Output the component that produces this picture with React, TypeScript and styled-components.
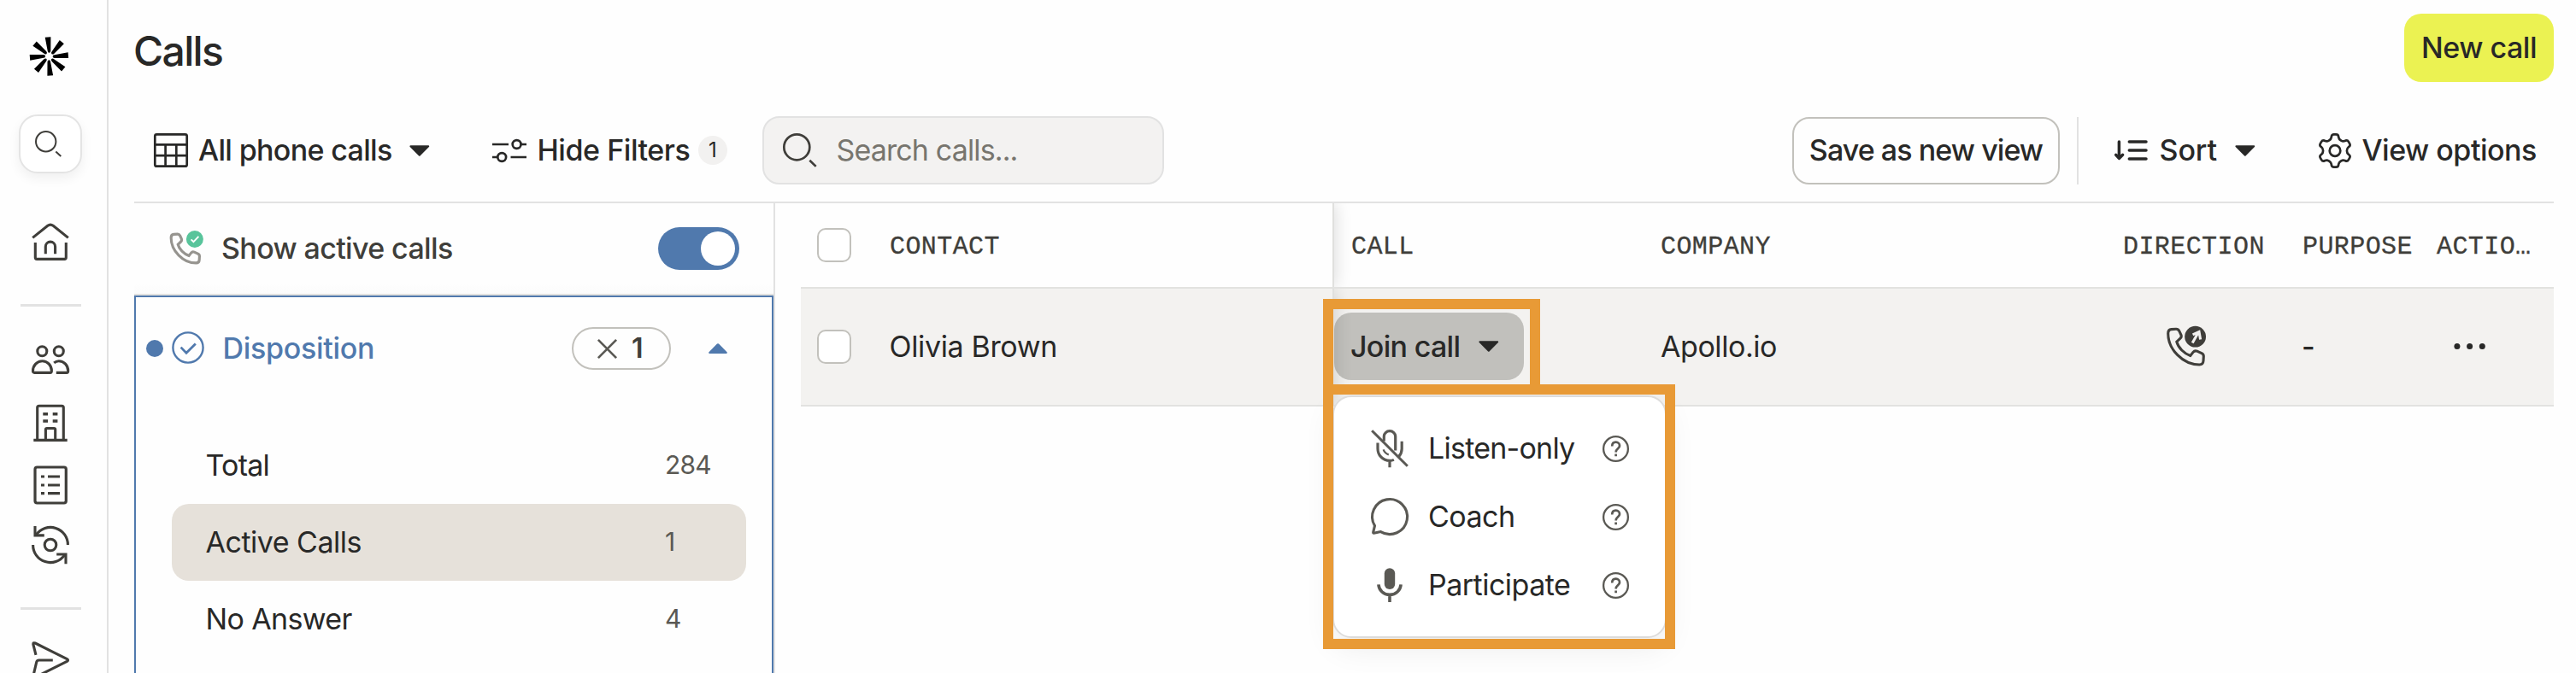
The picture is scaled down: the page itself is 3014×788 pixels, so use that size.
import React from "react";
import styled, { createGlobalStyle, css } from "styled-components";

const color = {
  ink: "#282827",
  text: "#3f3e3a",
  muted: "#5a5954",
  placeholder: "#77756e",
  line: "#e2e2e2",
  outline: "#c2c1bc",
  surface: "#f3f2f0",
  blue: "#5079ad",
  highlight: "#e89a36",
};

const GlobalStyle = createGlobalStyle`
  *, *::before, *::after { box-sizing: border-box; }
  body { margin: 0; background: #fefefe; }
  button { border: 0; margin: 0; padding: 0; background: none; font: inherit; color: inherit; }
  svg { display: block; flex: none; overflow: visible; }
`;

const Page = styled.div`
  display: flex;
  height: 788px;
  overflow: hidden;
  background: #fefefe;
  color: ${color.ink};
  font-family: Inter, "Liberation Sans", sans-serif;
  font-size: 34px;
  line-height: 40px;
`;

const Label = styled.span<{ $track?: number; $strong?: boolean }>`
  white-space: nowrap;
  font-weight: ${(p) => (p.$strong ? 500 : 400)};
  letter-spacing: ${(p) => p.$track ?? -0.5}px;
`;

/* ---------- Side navigation ---------- */

const Sidebar = styled.nav`
  flex: none;
  width: 127px;
  padding: 43px 0 0 22px;
  border-right: 2px solid ${color.line};
  color: ${color.text};
`;

const NavLogo = styled.div`
  margin-left: 13px;
  height: 91px;
  color: #000;
`;

const NavSearch = styled.button`
  display: flex;
  width: 74px;
  height: 69px;
  padding: 18px 0 0 17px;
  border: 2px solid #e4e4e4;
  border-radius: 22px;
  background: #fff;
  box-shadow: 0 6px 14px rgba(0, 0, 0, 0.06);
`;

const NavItem = styled.div<{ $gap: number; $inset?: number }>`
  margin: ${(p) => p.$gap}px 0 0 ${(p) => p.$inset ?? 15}px;
`;

const NavDivider = styled.div<{ $gap: number }>`
  width: 71px;
  height: 3px;
  margin: ${(p) => p.$gap}px 0 0 2px;
  background: ${color.line};
`;

/* ---------- Main area ---------- */

const Main = styled.main`
  flex: 1;
  min-width: 0;
  display: flex;
  flex-direction: column;
  padding: 16px 26px 0 30px;
`;

const Header = styled.header`
  display: flex;
  align-items: center;
  justify-content: space-between;
  height: 80px;
`;

const Title = styled.h1`
  margin: 0 0 0 -1px;
  padding: 7px 0 0 0;
  font-size: 48px;
  line-height: 58px;
  font-weight: 500;
  letter-spacing: -1.66px;
`;

const PrimaryButton = styled.button`
  width: 175px;
  height: 80px;
  border-radius: 20px;
  background: #ebf252;
`;

const Toolbar = styled.div`
  display: flex;
  align-items: center;
  height: 142px;
  flex: none;
  padding: 40px 0 20px;
  border-bottom: 2px solid ${color.line};
`;

const ToolButton = styled.button<{ $width: number; $inset?: number; $gap?: number }>`
  display: flex;
  align-items: center;
  width: ${(p) => p.$width}px;
  height: 80px;
  padding-left: ${(p) => p.$inset ?? 0}px;
  gap: ${(p) => p.$gap ?? 12.5}px;
`;

const CaretSlot = styled.span`
  margin-left: 8.5px;
`;

const CountBadge = styled.span`
  width: 34px;
  height: 34px;
  margin-left: -3px;
  border-radius: 50%;
  background: #f2f1f0;
  font-size: 24px;
  line-height: 33px;
  text-align: center;
`;

const SearchField = styled.div`
  display: flex;
  align-items: center;
  width: 470px;
  height: 80px;
  padding-left: 22px;
  gap: 22.5px;
  border: 2px solid ${color.line};
  border-radius: 20px;
  background: #f3f2f1;
  color: ${color.placeholder};
`;

const ToolbarEnd = styled.div`
  display: flex;
  align-items: center;
  margin-left: auto;
`;

const OutlineButton = styled.button`
  width: 313px;
  height: 79px;
  margin: 1px 20px 0 0;
  padding-bottom: 1px;
  border: 2px solid ${color.outline};
  border-radius: 20px;
`;

const ToolDivider = styled.div`
  width: 2px;
  height: 79px;
  margin: 1px 42px 0 0;
  background: ${color.line};
`;

const Content = styled.div`
  display: flex;
  flex: 1;
  min-height: 0;
`;

/* ---------- Filters panel ---------- */

const Filters = styled.aside`
  display: flex;
  flex-direction: column;
  flex: none;
  width: 750px;
  border-right: 2px solid ${color.line};
`;

const ActiveToggleRow = styled.div`
  display: flex;
  align-items: center;
  flex: none;
  height: 108px;
  padding: 0 40px 0 41px;
  gap: 13px;
  color: ${color.text};
  border-bottom: 2px solid #e2e1df;
  background: linear-gradient(to top, #fbfbfb, #fefefe 12px);
`;

const Switch = styled.span`
  display: flex;
  justify-content: flex-end;
  width: 95px;
  height: 50px;
  margin-left: auto;
  padding: 5px;
  border-radius: 25px;
  background: ${color.blue};

  &::after {
    content: "";
    width: 40px;
    height: 40px;
    border-radius: 50%;
    background: #fff;
  }
`;

const Facet = styled.section`
  flex: 1;
  border: 2px solid ${color.blue};
  border-bottom: 0;
`;

const FacetHead = styled.div`
  display: flex;
  align-items: center;
  height: 120px;
  padding: 0 52px 0 12px;
  color: ${color.blue};
`;

const FacetDot = styled.span`
  width: 20px;
  height: 20px;
  margin-right: 10px;
  border-radius: 50%;
  background: ${color.blue};
`;

const FacetName = styled(Label)`
  margin-left: 21.5px;
`;

const ClearPill = styled.button`
  display: flex;
  align-items: center;
  gap: 17px;
  width: 116px;
  height: 50px;
  margin: 0 44px 0 auto;
  padding-left: 28px;
  border: 2px solid ${color.outline};
  border-radius: 25px;
  font-size: 32px;
  font-weight: 600;
  color: ${color.text};
`;

const OptionList = styled.ul`
  margin: 32px 30px 0 42px;
  padding: 0;
  list-style: none;
`;

const Option = styled.li<{ $selected?: boolean }>`
  display: flex;
  align-items: center;
  justify-content: space-between;
  height: 90px;
  padding-left: 39.5px;
  border-radius: 20px;
  ${(p) => p.$selected && css`background: #e6e1da;`}
`;

const OptionCount = styled.span`
  width: 95px;
  padding-bottom: 2px;
  font-size: 30px;
  line-height: 36px;
  letter-spacing: -0.8px;
  color: ${color.muted};
`;

/* ---------- Calls table ---------- */

const Table = styled.div`
  flex: 1;
  margin-left: 30px;
`;

const Row = styled.div<{ $head?: boolean }>`
  display: grid;
  grid-template-columns: 83px 541px 362px 540px 210px 158px 157px;
  height: ${(p) => (p.$head ? 100 : 138)}px;
  border-bottom: 2px solid #e2e2e0;
  background: ${(p) => (p.$head ? "#fefefe" : color.surface)};
`;

const Cell = styled.div<{ $inset?: number }>`
  display: flex;
  align-items: center;
  padding-left: ${(p) => p.$inset ?? 20}px;
`;

const PinnedCell = styled(Cell)`
  position: relative;
  z-index: 1;
  border-right: 2px solid #e0e0de;
  box-shadow: 2px 0 18px rgba(0, 0, 0, 0.13);
  clip-path: inset(0 -24px 0 0);
`;

const ColumnName = styled.span`
  padding: 3px 0 0 1px;
  font-family: "Liberation Mono", "DejaVu Sans Mono", monospace;
  font-size: 30px;
  line-height: 34px;
  letter-spacing: 0.42px;
  color: ${color.text};
  -webkit-text-stroke: 0.3px ${color.text};
`;

const Checkbox = styled.span`
  width: 40px;
  height: 40px;
  border: 2px solid ${color.outline};
  border-radius: 10px;
  background: #fff;
`;

const JoinArea = styled.div`
  position: relative;
  height: 79px;
  margin-bottom: 1px;
`;

const JoinButton = styled.button`
  display: flex;
  align-items: center;
  gap: 21.5px;
  width: 222px;
  height: 79px;
  padding-left: 19px;
  border-radius: 20px;
  background: #c1c0bc;
`;

const Menu = styled.div`
  position: absolute;
  z-index: 5;
  top: 97px;
  left: -2px;
  width: 391px;
  height: 284px;
  padding: 20px 42.5px 0 43px;
  border: 2px solid #dddcdb;
  border-radius: 22px;
  background: #fff;
  box-shadow: 0 12px 36px rgba(0, 0, 0, 0.07);
`;

const MenuItem = styled.div`
  display: flex;
  align-items: center;
  height: 80px;
  color: ${color.muted};
`;

const MenuIcon = styled.span`
  display: flex;
  justify-content: center;
  width: 44px;
  margin-right: 23px;
`;

const MenuLabel = styled(Label)`
  margin-right: auto;
  color: ${color.ink};
`;

const Highlight = styled.div<{ $top: number; $width: number; $height: number }>`
  position: absolute;
  z-index: 6;
  left: -13px;
  top: ${(p) => p.$top}px;
  width: ${(p) => p.$width}px;
  height: ${(p) => p.$height}px;
  border: 12px solid ${color.highlight};
  pointer-events: none;
`;

/* ---------- Icons ---------- */

type IconProps = { w: number; h: number; stroke?: number; children: React.ReactNode };

const Icon = ({ w, h, stroke = 3, children }: IconProps) => (
  <svg width={w} height={h} viewBox={`0 0 ${w} ${h}`} fill="none" stroke="currentColor" strokeWidth={stroke}>
    {children}
  </svg>
);

const LogoIcon = () => (
  <Icon w={45} h={46} stroke={0}>
    <g fill="currentColor" transform="translate(22.4 23)">
      {[0, 45, 90, 135, 180, 225, 270, 315].map((a) => (
        <path key={a} transform={`rotate(${a})`} d="M-4.7-22.2 2-22.7 1.9-6.6Q1.8-4.4 .2-4.2-1.6-4.2-1.7-6.4Z" />
      ))}
    </g>
  </Icon>
);

const MagnifierSmall = () => (
  <Icon w={32} h={32} stroke={2}>
    <circle cx="12.7" cy="11.7" r="11.7" />
    <path d="M24.3 23.5l6 5.6" />
  </Icon>
);

const MagnifierIcon = () => (
  <Icon w={40} h={40} stroke={2.7}>
    <circle cx="16.3" cy="16.3" r="15" stroke={color.text} />
    <path d="M31.3 31.7l7.4 7.2" stroke={color.text} />
  </Icon>
);

const HomeIcon = () => (
  <Icon w={44} h={44} stroke={3.1}>
    <path d="M1.2 17.4 18.8 3.3Q22 .9 25.2 3.3L42.8 17.4" />
    <path d="M4.3 23V40.6Q4.3 42.4 6.1 42.4H38.5Q40.3 42.4 40.3 40.6V23" />
    <path d="M16.3 36.2V27.8a5.6 5.6 0 0 1 11.3 0V36.2" />
  </Icon>
);

const PeopleIcon = () => (
  <Icon w={44} h={34} stroke={3.1}>
    <circle cx="12.3" cy="7.3" r="5.5" />
    <circle cx="31.8" cy="7.3" r="5.5" />
    <path d="M1.5 30.3C1.5 24 6.3 18.7 12.5 18.7S23.4 24 23.4 30.3Q23.4 32.4 21.6 32.4H3.2Q1.5 32.4 1.5 30.3Z" />
    <path d="M26.2 20.9Q28.8 18.7 31.8 18.7C38 18.7 42.7 24 42.7 30.3Q42.7 32.4 41 32.4H28.8" />
  </Icon>
);

const BuildingIcon = () => (
  <Icon w={40} h={44} stroke={3.1}>
    <path d="M4.7 42V4.3Q4.7 2.3 6.7 2.3H33.3Q35.3 2.3 35.3 4.3V42M.3 42.4H39.7" />
    <path d="M14.4 42V30Q14.4 28.5 15.9 28.5H24.2Q25.7 28.5 25.7 30V42" />
    <path d="M11.3 11.7H17M22.7 11.7H28.4M11.3 20H17M22.7 20H28.4" strokeWidth="3.4" />
  </Icon>
);

const ListIcon = () => (
  <Icon w={40} h={46} stroke={3.2}>
    <rect x="2" y="2" width="36.3" height="42" rx="2.4" />
    <path d="M9 13H13M17 13H31M9 23H13M17 23H31M9 32.7H13M17 32.7H31" />
  </Icon>
);

const CycleIcon = () => (
  <Icon w={44} h={44} stroke={3.1}>
    <circle cx="22" cy="22" r="6.8" />
    <path d="M5.4 10.2A20.3 20.3 0 0 1 42.4 22M1.6 22A20.3 20.3 0 0 0 38.6 33.8" />
    <path d="M4 0V10.9H14.8M29.2 33H40V44.2" />
  </Icon>
);

const SendIcon = () => (
  <Icon w={44} h={44} stroke={3.1}>
    <path d="M5 15.8 1.9 3.6Q1.5.9 4.2 2L41.4 20.7Q43.8 22 41.4 23.3L4.2 42Q1.5 43.2 1.9 40.4L5.8 24Q6.4 22 8.6 22H24.8" />
  </Icon>
);

const TableIcon = () => (
  <Icon w={40} h={40} stroke={2.7}>
    <rect x="1.3" y="1.3" width="37.4" height="37.4" rx="2" />
    <path d="M1.3 13.4H38.7M1.3 26.2H38.7M13.6 13.4V38.7M26.3 13.4V38.7" />
  </Icon>
);

const SlidersIcon = () => (
  <Icon w={40} h={27} stroke={2.7}>
    <path d="M0 6H19M34 6H40M0 21H6M21.5 21H40" />
    <circle cx="28.6" cy="6" r="4.9" />
    <circle cx="11.2" cy="21" r="4.9" />
  </Icon>
);

const SortIcon = () => (
  <Icon w={40} h={24} stroke={3.5}>
    <g strokeLinecap="round" strokeLinejoin="round">
      <path d="M5.4 2V21M1.7 17.3 5.4 21.4 9.6 17.3" />
      <path d="M17.3 2H37M17.3 12H37M17.3 22H37" />
    </g>
  </Icon>
);

const CaretDown = () => (
  <Icon w={24} h={13} stroke={2}>
    <path d="M1.4 1.2H22.2L11.8 11.8Z" fill="currentColor" strokeLinejoin="round" />
  </Icon>
);

const CaretUp = () => (
  <Icon w={22} h={12} stroke={0}>
    <path d="M10 .6Q11 -.3 12 .6L21.8 10.6 21.4 12H.6L.2 10.6Z" fill="currentColor" />
  </Icon>
);

/* Outline of a six-toothed cog with softened corners. */
const cogPath = (() => {
  const pts: [number, number][] = [];
  for (let i = 0; i < 6; i++) {
    const a = i * 60 - 90;
    ([[-19, 14.2], [-11, 19.4], [11, 19.4], [19, 14.2]] as const).forEach(([d, r]) => {
      const t = ((a + d) * Math.PI) / 180;
      pts.push([r * Math.cos(t), r * Math.sin(t)]);
    });
  }
  const n = pts.length;
  const toward = (p: [number, number], q: [number, number], by: number) => {
    const len = Math.hypot(q[0] - p[0], q[1] - p[1]);
    const k = Math.min(by / len, 0.5);
    return `${(p[0] + (q[0] - p[0]) * k).toFixed(2)} ${(p[1] + (q[1] - p[1]) * k).toFixed(2)}`;
  };
  return (
    pts
      .map((p, i) => `${i ? "L" : "M"}${toward(p, pts[(i + n - 1) % n], 2.4)}Q${p[0].toFixed(2)} ${p[1].toFixed(2)} ${toward(p, pts[(i + 1) % n], 2.4)}`)
      .join("") + "Z"
  );
})();

const CogIcon = () => (
  <Icon w={38} h={41} stroke={2.7}>
    <g transform="translate(19 20.5)">
      <path d={cogPath} />
      <circle r="6.3" />
    </g>
  </Icon>
);

const handset =
  "M5.5 3.6 11 3.2C13 3.1 13.9 3.8 14.8 5.6L16.8 9.8C17.6 11.6 17.3 13 16 14.2L11.8 18.2C13.5 25 20.5 32.2 27.8 34.4L31 30.4C32.3 28.8 33.8 28.4 35.6 29.2L41 31.6C42.9 32.5 43.4 33.5 43.3 35.4L43 40.5C42.8 43.6 41.3 45 38.3 45C19 45 1.7 27 1.7 8.5C1.7 5.3 2.7 3.8 5.5 3.6Z";

const OutboundIcon = () => (
  <Icon w={48} h={48} stroke={3.1}>
    <g color={color.text}>
      <path d={handset} stroke="currentColor" />
      <circle cx="33.6" cy="12.2" r="12.4" fill="currentColor" stroke="none" />
    </g>
    <path d="M30.2 19.6 36.4 8.6M30.6 9.8 38 6.4 39.6 15.4" stroke={color.surface} />
  </Icon>
);

const ActiveCallIcon = () => (
  <Icon w={48} h={40} stroke={3.9}>
    <g transform="translate(.8 .5) scale(.8 .81)">
      <path d={handset} stroke="#96948f" />
    </g>
    <circle cx="29.9" cy="9" r="11.6" fill="#fefefe" stroke="none" />
    <circle cx="29.9" cy="9" r="10" fill="#58c49b" stroke="none" />
    <path d="M25.6 9.4 28.4 12.2 34.4 5.8" stroke="#fff" strokeWidth="1.9" />
  </Icon>
);

const CheckCircleIcon = () => (
  <Icon w={38} h={38} stroke={2.4}>
    <circle cx="19" cy="18" r="17.6" />
    <path d="M10.6 17.6 17 24.2 27.8 13.6" strokeWidth="2.8" />
  </Icon>
);

const CloseIcon = () => (
  <Icon w={23} h={23} stroke={2.7}>
    <path d="M.9 .9 22.1 22.1M22.1 .9 .9 22.1" stroke={color.muted} />
  </Icon>
);

const MutedMicIcon = () => (
  <Icon w={44} h={44} stroke={3.2}>
    <path d="M1.2 1.2 42.8 42.8" strokeWidth="3" />
    <path d="M15.3 13.5V8.3a6.7 6.7 0 0 1 13.4 0V24.6" />
    <path d="M8 15.4V22.2C8 30 13.8 36.4 22 36.4Q24.6 36.4 26.9 35.4M36.2 13.7V22.4Q36.2 27.6 32.6 31.6M22 37V44.2" />
    <path d="M14.6 23.4Q16.2 27.8 20.8 29.4" strokeWidth="2.2" />
  </Icon>
);

const ChatIcon = () => (
  <Icon w={44} h={44} stroke={3.1}>
    <path d="M4.5 32.6A20.5 20.5 0 1 1 11.5 39.6L3.4 41.2Q2.5 41.2 2.7 40.2Z" strokeLinejoin="round" />
  </Icon>
);

const MicIcon = () => (
  <Icon w={30} h={41} stroke={3.6}>
    <rect x="8.8" y=".3" width="12.4" height="24.8" rx="6.2" fill="currentColor" stroke="none" />
    <path d="M1.9 19.3C2.4 26.3 8 31.4 15 31.4S27.6 26.3 28.1 19.3M15 31V40" />
  </Icon>
);

const HelpIcon = () => (
  <Icon w={31} h={31} stroke={2.3}>
    <circle cx="15.5" cy="15.5" r="14.4" />
    <path d="M11.2 12.4C11.2 9.4 13 7.7 15.6 7.7S20 9.5 20 11.9C20 15.2 15.6 15.4 15.6 19.4M15.6 21.6V24.2" strokeWidth="2.7" />
  </Icon>
);

const DotsIcon = () => (
  <svg width="38" height="8" viewBox="0 0 38 8" fill="currentColor">
    {[3.9, 18.6, 33.3].map((x) => (
      <circle key={x} cx={x} cy="3.6" r="3.5" />
    ))}
  </svg>
);

const IconSlot = styled.span<{ $shift: number }>`
  margin-left: ${(p) => p.$shift}px;
`;

/* ---------- Data ---------- */

const options = [
  { name: "Total", count: "284", track: -0.76 },
  { name: "Active Calls", count: "1", track: -0.5, selected: true },
  { name: "No Answer", count: "4", track: -0.64 },
];

const joinModes = [
  { name: "Listen-only", track: -0.76, icon: <MutedMicIcon /> },
  { name: "Coach", track: -0.52, icon: <ChatIcon /> },
  { name: "Participate", track: -0.52, icon: <MicIcon /> },
];

export default function App() {
  return (
    <>
      <GlobalStyle />
      <Page>
        <Sidebar>
          <NavLogo><LogoIcon /></NavLogo>
          <NavSearch><MagnifierSmall /></NavSearch>
          <NavItem $gap={58}><HomeIcon /></NavItem>
          <NavDivider $gap={51} />
          <NavItem $gap={45}><PeopleIcon /></NavItem>
          <NavItem $gap={35} $inset={17}><BuildingIcon /></NavItem>
          <NavItem $gap={28} $inset={17}><ListIcon /></NavItem>
          <NavItem $gap={25}><CycleIcon /></NavItem>
          <NavDivider $gap={51} />
          <NavItem $gap={37}><SendIcon /></NavItem>
        </Sidebar>

        <Main>
          <Header>
            <Title>Calls</Title>
            <PrimaryButton><Label $strong $track={-0.46}>New call</Label></PrimaryButton>
          </Header>

          <Toolbar>
            <ToolButton $width={419} $inset={23} $gap={12}>
              <TableIcon />
              <Label $strong $track={-0.66}>All phone calls</Label>
              <CaretSlot><CaretDown /></CaretSlot>
            </ToolButton>
            <ToolButton $width={316}>
              <SlidersIcon />
              <Label $strong $track={-0.45}>Hide Filters</Label>
              <CountBadge>1</CountBadge>
            </ToolButton>
            <SearchField>
              <MagnifierIcon />
              <Label $track={-0.87}>Search calls...</Label>
            </SearchField>
            <ToolbarEnd>
              <OutlineButton><Label $strong $track={-0.93}>Save as new view</Label></OutlineButton>
              <ToolDivider />
              <ToolButton $width={239}>
                <SortIcon />
                <Label $strong $track={-0.08}>Sort</Label>
                <CaretSlot><CaretDown /></CaretSlot>
              </ToolButton>
              <ToolButton $width={275}>
                <CogIcon />
                <Label $strong $track={-0.5}>View options</Label>
              </ToolButton>
            </ToolbarEnd>
          </Toolbar>

          <Content>
            <Filters>
              <ActiveToggleRow>
                <ActiveCallIcon />
                <Label $strong $track={-0.63}>Show active calls</Label>
                <Switch />
              </ActiveToggleRow>
              <Facet>
                <FacetHead>
                  <FacetDot />
                  <CheckCircleIcon />
                  <FacetName $strong $track={-0.3}>Disposition</FacetName>
                  <ClearPill><CloseIcon />1</ClearPill>
                  <CaretUp />
                </FacetHead>
                <OptionList>
                  {options.map((o) => (
                    <Option key={o.name} $selected={o.selected}>
                      <Label $track={o.track}>{o.name}</Label>
                      <OptionCount>{o.count}</OptionCount>
                    </Option>
                  ))}
                </OptionList>
              </Facet>
            </Filters>

            <Table>
              <Row $head>
                <Cell $inset={19}><Checkbox /></Cell>
                <PinnedCell><ColumnName>CONTACT</ColumnName></PinnedCell>
                <Cell $inset={19}><ColumnName>CALL</ColumnName></Cell>
                <Cell $inset={19}><ColumnName>COMPANY</ColumnName></Cell>
                <Cell><ColumnName>DIRECTION</ColumnName></Cell>
                <Cell><ColumnName>PURPOSE</ColumnName></Cell>
                <Cell $inset={19}><ColumnName>ACTIO…</ColumnName></Cell>
              </Row>
              <Row>
                <Cell $inset={19}><Checkbox /></Cell>
                <PinnedCell $inset={20.5}><Label $track={-0.35}>Olivia Brown</Label></PinnedCell>
                <Cell $inset={0}>
                  <JoinArea>
                    <JoinButton>
                      <Label $strong $track={-0.7}>Join call</Label>
                      <CaretDown />
                    </JoinButton>
                    <Menu>
                      {joinModes.map((m) => (
                        <MenuItem key={m.name}>
                          <MenuIcon>{m.icon}</MenuIcon>
                          <MenuLabel $track={m.track}>{m.name}</MenuLabel>
                          <HelpIcon />
                        </MenuItem>
                      ))}
                    </Menu>
                    <Highlight $top={-16} $width={254} $height={112} />
                    <Highlight $top={84} $width={412} $height={310} />
                  </JoinArea>
                </Cell>
                <Cell><Label $track={-0.44}>Apollo.io</Label></Cell>
                <Cell $inset={72}><OutboundIcon /></Cell>
                <Cell><Label $strong>-</Label></Cell>
                <Cell><IconSlot $shift={20}><DotsIcon /></IconSlot></Cell>
              </Row>
            </Table>
          </Content>
        </Main>
      </Page>
    </>
  );
}
